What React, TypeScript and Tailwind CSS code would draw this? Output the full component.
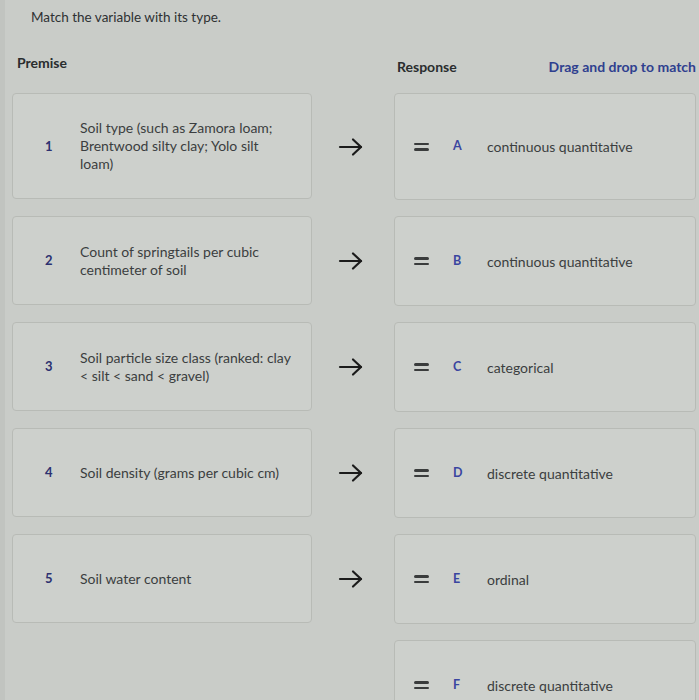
import React from "react";

type Row = {
  num: number;
  premise: string[];
  letter: string;
  response: string;
  tall?: boolean;
};

const rows: Row[] = [
  {
    num: 1,
    premise: ["Soil type (such as Zamora loam;", "Brentwood silty clay; Yolo silt", "loam)"],
    letter: "A",
    response: "continuous quantitative",
    tall: true,
  },
  { num: 2, premise: ["Count of springtails per cubic", "centimeter of soil"], letter: "B", response: "continuous quantitative" },
  { num: 3, premise: ["Soil particle size class (ranked: clay", "< silt < sand < gravel)"], letter: "C", response: "categorical" },
  { num: 4, premise: ["Soil density (grams per cubic cm)"], letter: "D", response: "discrete quantitative" },
  { num: 5, premise: ["Soil water content"], letter: "E", response: "ordinal" },
];

const Arrow = () => (
  <svg width="26" height="20" viewBox="0 0 26 20" fill="none" stroke="#1b1b1b" strokeWidth="2.2" strokeLinecap="round" strokeLinejoin="round">
    <path d="M2 10h21" />
    <path d="M15 2.5l8 7.5-8 7.5" />
  </svg>
);

const Handle = () => (
  <div className="flex flex-col gap-[3px] w-[15px]">
    <div className="h-[2.5px] bg-[#3a3c3c] rounded-sm" />
    <div className="h-[2.5px] bg-[#3a3c3c] rounded-sm" />
  </div>
);

const ResponseCard = ({ letter, text, tall }: { letter: string; text: string; tall?: boolean }) => (
  <div
    className={`flex items-center border border-[#b8bbb6] rounded-[4px] bg-[#cdd0cc] pl-[19px] ${
      tall ? "h-[107px]" : "h-[90px]"
    }`}
  >
    <Handle />
    <span className="w-[33px] pl-[24px] text-[12.5px] font-bold text-[#3a45a0]">{letter}</span>
    <span className="ml-[25px] text-[14px] text-[#3b3e40]">{text}</span>
  </div>
);

export default function App() {
  return (
    <div
      className="min-h-[700px] w-[699px] bg-[#c9ccc8] border-l-[5px] border-[#c1c4c0] overflow-hidden"
      style={{ fontFamily: "Lato, 'Open Sans', sans-serif" }}
    >
      <div className="pl-[26px] pt-[7px] text-[13.5px] text-[#2e3133]">Match the variable with its type.</div>

      <div className="grid grid-cols-[300px_82px_302px] pl-[7px] mt-[25px]">
        <div className="text-[14px] font-bold text-[#2a2d2f] pl-[5px]">Premise</div>
        <div />
        <div className="flex justify-between items-center pt-[4px]">
          <span className="text-[14px] font-bold text-[#2a2d2f] pl-[3px]">Response</span>
          <span className="text-[14px] font-bold text-[#2f3f8f]">Drag and drop to match</span>
        </div>

        <div className="col-span-3 h-[16px]" />

        {rows.map((r) => (
          <React.Fragment key={r.num}>
            <div
              className={`flex items-center border border-[#b8bbb6] rounded-[4px] bg-[#cdd0cc] mb-[16px] ${
                r.tall ? "h-[106px]" : "h-[89px]"
              }`}
            >
              <span className="w-[67px] pl-[32px] text-[13px] font-bold text-[#2c3170]">{r.num}</span>
              <div className="text-[14px] leading-[18px] text-[#3b3e40]">
                {r.premise.map((l, i) => (
                  <div key={i}>{l}</div>
                ))}
              </div>
            </div>
            <div className={`flex items-center justify-center pr-[4px] mb-[16px] ${r.tall ? "h-[107px]" : "h-[90px]"}`}>
              <Arrow />
            </div>
            <div className="mb-[16px]">
              <ResponseCard letter={r.letter} text={r.response} tall={r.tall} />
            </div>
          </React.Fragment>
        ))}

        <div />
        <div />
        <div>
          <ResponseCard letter="F" text="discrete quantitative" />
        </div>
      </div>
    </div>
  );
}
